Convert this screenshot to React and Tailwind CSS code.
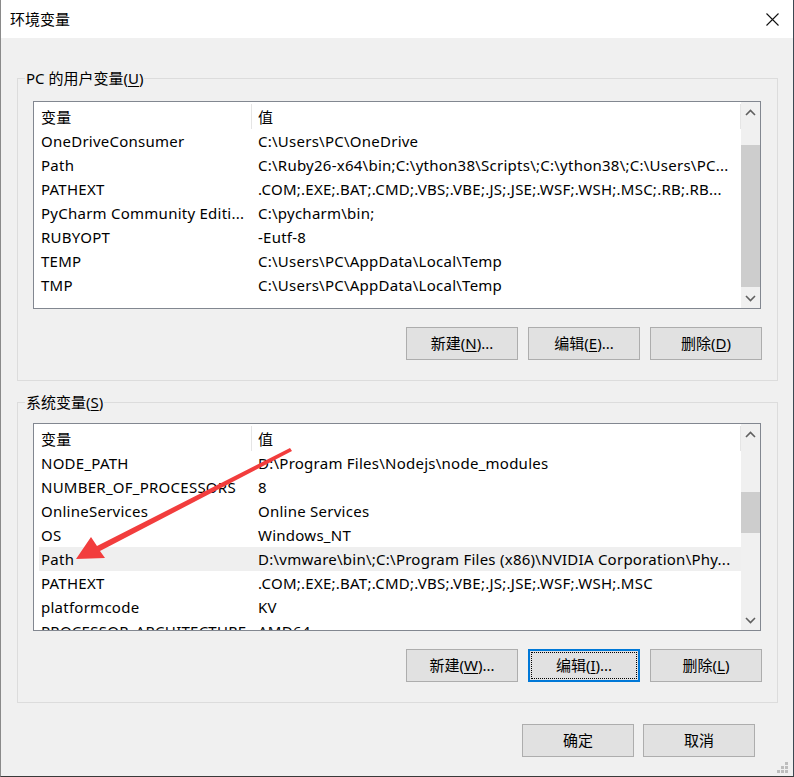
import React from 'react';

const userVars = [
    { name: 'OneDriveConsumer', value: 'C:\\Users\\PC\\OneDrive' },
    { name: 'Path', value: 'C:\\Ruby26-x64\\bin;C:\\ython38\\Scripts\\;C:\\ython38\\;C:\\Users\\PC...' },
    { name: 'PATHEXT', value: '.COM;.EXE;.BAT;.CMD;.VBS;.VBE;.JS;.JSE;.WSF;.WSH;.MSC;.RB;.RB...' },
    { name: 'PyCharm Community Editi...', value: 'C:\\pycharm\\bin;' },
    { name: 'RUBYOPT', value: '-Eutf-8' },
    { name: 'TEMP', value: 'C:\\Users\\PC\\AppData\\Local\\Temp' },
    { name: 'TMP', value: 'C:\\Users\\PC\\AppData\\Local\\Temp' },
];

const systemVars = [
    { name: 'NODE_PATH', value: 'D:\\Program Files\\Nodejs\\node_modules' },
    { name: 'NUMBER_OF_PROCESSORS', value: '8' },
    { name: 'OnlineServices', value: 'Online Services' },
    { name: 'OS', value: 'Windows_NT' },
    { name: 'Path', value: 'D:\\vmware\\bin\\;C:\\Program Files (x86)\\NVIDIA Corporation\\Phy...', selected: true },
    { name: 'PATHEXT', value: '.COM;.EXE;.BAT;.CMD;.VBS;.VBE;.JS;.JSE;.WSF;.WSH;.MSC' },
    { name: 'platformcode', value: 'KV' },
    { name: 'PROCESSOR_ARCHITECTURE', value: 'AMD64' },
];

function Chevron({ up }) {
    return (
        <svg width="11" height="7" viewBox="0 0 11 7">
            <polyline
                points={up ? '1,6 5.5,1.5 10,6' : '1,1 5.5,5.5 10,1'}
                fill="none"
                stroke="#606060"
                strokeWidth="1.6"
            />
        </svg>
    );
}

function ScrollBar({ gapClass, thumbClass }) {
    return (
        <div className="w-[19px] flex flex-col bg-[#f0f0f0]">
            <div className="h-[20px] flex items-center justify-center">
                <Chevron up />
            </div>
            <div className={gapClass} />
            <div className={`bg-[#cdcdcd] ${thumbClass}`} />
            <div className="flex-1" />
            <div className="h-[20px] flex items-center justify-center">
                <Chevron />
            </div>
        </div>
    );
}

function VarList({ rows, gapClass, thumbClass }) {
    return (
        <div className="ml-[15px] w-[728px] h-[208px] border border-[#828790] bg-white flex overflow-hidden">
            <div className="flex-1 flex flex-col overflow-hidden">
                <div className="h-[27px] pt-[3px] flex shrink-0">
                    <div className="w-[217px] pl-[7px] flex items-center">变量</div>
                    <div className="w-px h-[25px] -mt-[1px] bg-[#e5e5e5]" />
                    <div className="flex-1 pl-[6px] flex items-center">值</div>
                    <div className="w-px h-[25px] -mt-[1px] bg-[#e5e5e5]" />
                </div>
                {rows.map((row) => (
                    <div
                        key={row.name}
                        className={`ml-[5px] h-[24px] leading-[24px] flex shrink-0 whitespace-nowrap ${row.selected ? 'bg-[#efefef]' : ''}`}
                    >
                        <div className="w-[212px] pl-[2px] overflow-hidden">{row.name}</div>
                        <div className="flex-1 pl-[7px] overflow-hidden">{row.value}</div>
                    </div>
                ))}
            </div>
            <ScrollBar gapClass={gapClass} thumbClass={thumbClass} />
        </div>
    );
}

function WinButton({ children, focused }) {
    if (focused) {
        return (
            <button className="w-[112px] h-[33px] border-2 border-[#0078d7] bg-[#e1e1e1] p-px">
                <div className="w-full h-full border border-dotted border-black flex items-center justify-center">
                    {children}
                </div>
            </button>
        );
    }
    return (
        <button className="w-[112px] h-[33px] border border-[#adadad] bg-[#e1e1e1] flex items-center justify-center">
            {children}
        </button>
    );
}

const Key = ({ k }) => <span className="underline underline-offset-[2px] decoration-1">{k}</span>;

export default function App() {
    return (
        <div className="relative w-[794px] h-[777px] bg-[#f0f0f0] border-l border-r border-b border-l-[#8a8a8a] border-r-[#3c4852] border-b-[#3a3a3a] overflow-hidden text-[15px] tracking-[0.25px] text-black font-['Noto_Sans','Noto_Sans_CJK_SC',sans-serif]">
            {/* title bar */}
            <div className="h-[38px] bg-white flex items-center justify-between pl-[9px] pr-[14px]">
                <span className="text-[15px] tracking-normal">环境变量</span>
                <svg width="13" height="13" viewBox="0 0 13 13">
                    <path d="M0.5 0.5 L12.5 12.5 M12.5 0.5 L0.5 12.5" stroke="#111" strokeWidth="1.1" />
                </svg>
            </div>

            {/* user variables */}
            <fieldset className="mt-[30px] ml-[16px] w-[761px] border border-[#dcdcdc] pb-[20px]">
                <legend className="ml-[7px] px-[1px] h-[20px] leading-[20px] tracking-normal">
                    PC 的用户变量(<Key k="U" />)
                </legend>
                <div className="mt-[13px]">
                    <VarList rows={userVars} gapClass="h-[23px]" thumbClass="h-[142px]" />
                </div>
                <div className="mt-[18px] mr-[15px] flex justify-end gap-[10px] tracking-normal">
                    <WinButton>新建(<Key k="N" />)...</WinButton>
                    <WinButton>编辑(<Key k="E" />)...</WinButton>
                    <WinButton>删除(<Key k="D" />)</WinButton>
                </div>
            </fieldset>

            {/* system variables */}
            <fieldset className="mt-[11px] ml-[16px] w-[761px] border border-[#dcdcdc] pb-[20px]">
                <legend className="ml-[7px] px-[1px] h-[20px] leading-[20px] tracking-normal">
                    系统变量(<Key k="S" />)
                </legend>
                <div className="mt-[11px]">
                    <VarList rows={systemVars} gapClass="h-[48px]" thumbClass="h-[41px]" />
                </div>
                <div className="mt-[18px] mr-[15px] flex justify-end gap-[10px] tracking-normal">
                    <WinButton>新建(<Key k="W" />)...</WinButton>
                    <WinButton focused>编辑(<Key k="I" />)...</WinButton>
                    <WinButton>删除(<Key k="L" />)</WinButton>
                </div>
            </fieldset>

            {/* dialog buttons */}
            <div className="mt-[21px] mr-[38px] flex justify-end gap-[9px] tracking-normal">
                <WinButton>确定</WinButton>
                <WinButton>取消</WinButton>
            </div>

            {/* size grip */}
            <svg className="absolute right-[4px] bottom-[2px]" width="12" height="12" viewBox="0 0 12 12">
                <g fill="#bdbdbd">
                    <rect x="8" y="0" width="3" height="3" />
                    <rect x="4" y="4" width="3" height="3" />
                    <rect x="8" y="4" width="3" height="3" />
                    <rect x="0" y="8" width="3" height="3" />
                    <rect x="4" y="8" width="3" height="3" />
                    <rect x="8" y="8" width="3" height="3" />
                </g>
            </svg>

            {/* red annotation arrow */}
            <svg className="absolute left-0 top-0 pointer-events-none" width="794" height="777" viewBox="0 0 794 777">
                <polygon
                    points="75,559 90,537 96,546 289,448 291,451 99,551 104,558"
                    fill="#f23d3d"
                />
            </svg>
        </div>
    );
}
